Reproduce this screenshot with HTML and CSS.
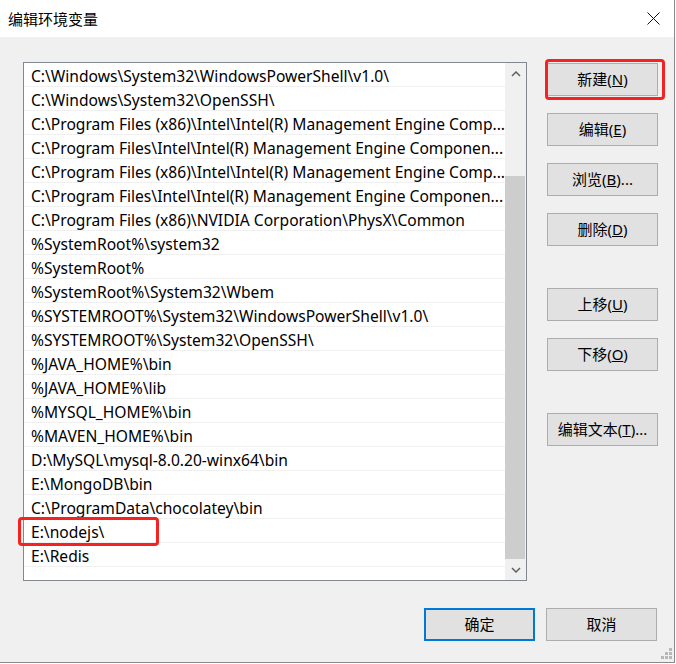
FILE: index.html
```html
<!DOCTYPE html>
<html lang="zh-CN">
<head>
    <meta charset="UTF-8">
    <title>编辑环境变量</title>
    <link rel="stylesheet" href="styles.css">
</head>
<body>
    <div class="dialog">
        <div class="titlebar">
            <span class="title">编辑环境变量</span>
            <svg class="close" width="13" height="13" viewBox="0 0 13 13">
                <path d="M0.5 0.5 L12.5 12.5 M12.5 0.5 L0.5 12.5" stroke="#111" stroke-width="1" fill="none"/>
            </svg>
        </div>
        <div class="content">
            <div class="list">
                <div class="rows">
                    <div class="row">C:\Windows\System32\WindowsPowerShell\v1.0\</div>
                    <div class="row">C:\Windows\System32\OpenSSH\</div>
                    <div class="row">C:\Program Files (x86)\Intel\Intel(R) Management Engine Comp...</div>
                    <div class="row">C:\Program Files\Intel\Intel(R) Management Engine Componen...</div>
                    <div class="row">C:\Program Files (x86)\Intel\Intel(R) Management Engine Comp...</div>
                    <div class="row">C:\Program Files\Intel\Intel(R) Management Engine Componen...</div>
                    <div class="row">C:\Program Files (x86)\NVIDIA Corporation\PhysX\Common</div>
                    <div class="row">%SystemRoot%\system32</div>
                    <div class="row">%SystemRoot%</div>
                    <div class="row">%SystemRoot%\System32\Wbem</div>
                    <div class="row">%SYSTEMROOT%\System32\WindowsPowerShell\v1.0\</div>
                    <div class="row">%SYSTEMROOT%\System32\OpenSSH\</div>
                    <div class="row">%JAVA_HOME%\bin</div>
                    <div class="row">%JAVA_HOME%\lib</div>
                    <div class="row">%MYSQL_HOME%\bin</div>
                    <div class="row">%MAVEN_HOME%\bin</div>
                    <div class="row">D:\MySQL\mysql-8.0.20-winx64\bin</div>
                    <div class="row">E:\MongoDB\bin</div>
                    <div class="row">C:\ProgramData\chocolatey\bin</div>
                    <div class="row marked">E:\nodejs\</div>
                    <div class="row">E:\Redis</div>
                </div>
                <div class="scrollbar">
                    <div class="arrow">
                        <svg width="10" height="6" viewBox="0 0 10 6"><polyline points="1,5 5,1 9,5" stroke="#606060" stroke-width="1.5" fill="none"/></svg>
                    </div>
                    <div class="thumb"></div>
                    <div class="arrow">
                        <svg width="10" height="6" viewBox="0 0 10 6"><polyline points="1,1 5,5 9,1" stroke="#606060" stroke-width="1.5" fill="none"/></svg>
                    </div>
                </div>
            </div>
            <div class="side">
                <button class="btn marked">新建(<u>N</u>)</button>
                <button class="btn">编辑(<u>E</u>)</button>
                <button class="btn">浏览(<u>B</u>)...</button>
                <button class="btn">删除(<u>D</u>)</button>
                <button class="btn group">上移(<u>U</u>)</button>
                <button class="btn">下移(<u>O</u>)</button>
                <button class="btn group">编辑文本(<u>T</u>)...</button>
            </div>
        </div>
        <div class="footer">
            <button class="btn primary">确定</button>
            <button class="btn">取消</button>
        </div>
        <svg class="grip" width="12" height="12" viewBox="0 0 12 12">
            <rect x="9" y="0" width="3" height="3" fill="#b8b8b8"/>
            <rect x="5" y="4" width="3" height="3" fill="#b8b8b8"/>
            <rect x="9" y="4" width="3" height="3" fill="#b8b8b8"/>
            <rect x="1" y="8" width="3" height="3" fill="#b8b8b8"/>
            <rect x="5" y="8" width="3" height="3" fill="#b8b8b8"/>
            <rect x="9" y="8" width="3" height="3" fill="#b8b8b8"/>
        </svg>
    </div>
</body>
</html>
```

FILE: styles.css
```css
html {
    background-color: #ffffff;
}
body {
    margin: 0;
    font-family: "Noto Sans", "Noto Sans CJK SC", sans-serif;
    font-size: 15px;
    color: #000;
}
.dialog {
    position: relative;
    width: 674px;
    height: 662px;
    background-color: #f0f0f0;
    border-right: 1px solid #8a8a8a;
    border-bottom: 1px solid #8a8a8a;
}
.titlebar {
    height: 37px;
    background-color: #ffffff;
    display: flex;
    align-items: center;
    justify-content: space-between;
    padding: 0 14px 0 8px;
}
.title {
    font-family: "Noto Sans CJK SC", sans-serif;
    font-size: 15px;
    margin-top: -1px;
}
.close {
    margin-top: -1px;
}
.content {
    display: flex;
    gap: 20px;
    padding: 25px 0 0 23px;
}
.list {
    width: 502px;
    height: 517px;
    border: 1px solid #828790;
    background-color: #ffffff;
    display: flex;
}
.rows {
    flex: 1;
}
.row {
    position: relative;
    height: 23px;
    line-height: 26px;
    font-size: 15.6px;
    border-bottom: 1px solid #f0f0f0;
    padding-left: 7px;
    white-space: nowrap;
}
.row.marked::after {
    content: "";
    position: absolute;
    left: -6px;
    top: -2px;
    width: 135px;
    height: 23px;
    border: 3px solid #f52222;
    border-radius: 4px;
}
.scrollbar {
    width: 21px;
    background-color: #f0f0f0;
    display: flex;
    flex-direction: column;
}
.arrow {
    height: 21px;
    display: flex;
    align-items: center;
    justify-content: center;
}
.thumb {
    flex: 1;
    margin: 92px 1px 0 0;
    background-color: #cdcdcd;
}
.side {
    width: 111px;
    display: flex;
    flex-direction: column;
    gap: 17px;
    padding-top: 1px;
}
.btn {
    position: relative;
    width: 111px;
    height: 33px;
    padding: 0 0 2px;
    font-family: "Noto Sans", "Noto Sans CJK SC", sans-serif;
    font-size: 15px;
    color: #000;
    background-color: #e1e1e1;
    border: 1px solid #adadad;
}
.btn.group {
    margin-top: 25px;
}
.btn.marked::after {
    content: "";
    position: absolute;
    left: -3px;
    top: -5px;
    width: 114px;
    height: 35px;
    border: 3px solid #f52222;
    border-radius: 4px;
}
.footer {
    display: flex;
    justify-content: flex-end;
    gap: 11px;
    padding: 27px 17px 0 0;
}
.btn.primary {
    border: 2px solid #0078d7;
}
.grip {
    position: absolute;
    right: 2px;
    bottom: 2px;
}
```
